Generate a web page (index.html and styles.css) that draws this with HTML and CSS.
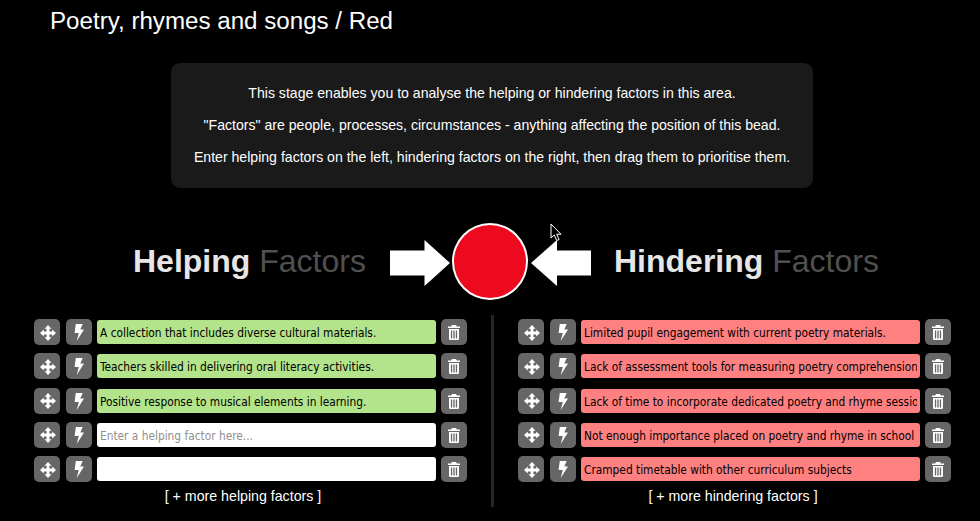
FILE: index.html
```html
<!DOCTYPE html>
<html lang="en">
<head>
<meta charset="utf-8">
<title>Poetry, rhymes and songs / Red</title>
<link rel="stylesheet" href="styles.css">
</head>
<body>
<svg class="defs" width="0" height="0" aria-hidden="true">
  <symbol id="i-move" viewBox="0 0 16 16"><path fill="#fff" d="M8 0l3.500 3.800H9.400v2.800h2.800V4.500L16 8l-3.800 3.500V9.400H9.400v2.800h2.100L8 16l-3.500-3.800h2.100V9.400H3.800v2.100L0 8l3.800-3.500v2.100h2.800V3.800H4.500z"/></symbol>
  <symbol id="i-bolt" viewBox="0 0 10 17"><path fill="#fff" d="M1.800 0h6.900L6.300 5.500H10L2.700 17l2.100-8H.6z"/></symbol>
  <symbol id="i-trash" viewBox="0 0 12 15"><path fill="#fff" fill-rule="evenodd" d="M4 0h4l.8 1.500H12V3H0V1.500h3.200zM1 4h10v9.800a1.200 1.200 0 0 1-1.200 1.200H2.200A1.200 1.200 0 0 1 1 13.800zM2.900 5.500v8h1.300v-8zM5.350 5.500v8h1.300v-8zM7.800 5.500v8h1.300v-8z"/></symbol>
</svg>

<h1 class="title">Poetry, rhymes and songs / Red</h1>

<section class="intro">
  <p>This stage enables you to analyse the helping or hindering factors in this area.</p>
  <p>"Factors" are people, processes, circumstances - anything affecting the position of this bead.</p>
  <p>Enter helping factors on the left, hindering factors on the right, then drag them to prioritise them.</p>
</section>

<section class="bead-row">
  <h2 class="factor-head"><b>Helping</b> <span>Factors</span></h2>
  <svg class="arrow" viewBox="0 0 60 46" width="60" height="46"><path fill="#fff" d="M0 10.500h34.500V0L60 23 34.500 46V35.500H0z"/></svg>
  <div class="bead"></div>
  <svg class="arrow" viewBox="0 0 60 46" width="60" height="46"><path fill="#fff" d="M60 10.500H26V0L0 23l26 23V35.500h34z"/></svg>
  <h2 class="factor-head"><b>Hindering</b> <span>Factors</span></h2>
</section>

<main class="columns">
  <section class="col">
    <div class="row">
      <button class="btn"><svg class="ic-move"><use href="#i-move"/></svg></button>
      <button class="btn"><svg class="ic-bolt"><use href="#i-bolt"/></svg></button>
      <input class="factor help" value="A collection that includes diverse cultural materials.">
      <button class="btn"><svg class="ic-trash"><use href="#i-trash"/></svg></button>
    </div>
    <div class="row">
      <button class="btn"><svg class="ic-move"><use href="#i-move"/></svg></button>
      <button class="btn"><svg class="ic-bolt"><use href="#i-bolt"/></svg></button>
      <input class="factor help" value="Teachers skilled in delivering oral literacy activities.">
      <button class="btn"><svg class="ic-trash"><use href="#i-trash"/></svg></button>
    </div>
    <div class="row">
      <button class="btn"><svg class="ic-move"><use href="#i-move"/></svg></button>
      <button class="btn"><svg class="ic-bolt"><use href="#i-bolt"/></svg></button>
      <input class="factor help" value="Positive response to musical elements in learning.">
      <button class="btn"><svg class="ic-trash"><use href="#i-trash"/></svg></button>
    </div>
    <div class="row">
      <button class="btn"><svg class="ic-move"><use href="#i-move"/></svg></button>
      <button class="btn"><svg class="ic-bolt"><use href="#i-bolt"/></svg></button>
      <input class="factor" placeholder="Enter a helping factor here...">
      <button class="btn"><svg class="ic-trash"><use href="#i-trash"/></svg></button>
    </div>
    <div class="row">
      <button class="btn"><svg class="ic-move"><use href="#i-move"/></svg></button>
      <button class="btn"><svg class="ic-bolt"><use href="#i-bolt"/></svg></button>
      <input class="factor">
      <button class="btn"><svg class="ic-trash"><use href="#i-trash"/></svg></button>
    </div>
    <div class="more more-help">[ + more helping factors ]</div>
  </section>

  <div class="divider"></div>

  <section class="col">
    <div class="row">
      <button class="btn"><svg class="ic-move"><use href="#i-move"/></svg></button>
      <button class="btn"><svg class="ic-bolt"><use href="#i-bolt"/></svg></button>
      <input class="factor hinder" value="Limited pupil engagement with current poetry materials.">
      <button class="btn"><svg class="ic-trash"><use href="#i-trash"/></svg></button>
    </div>
    <div class="row">
      <button class="btn"><svg class="ic-move"><use href="#i-move"/></svg></button>
      <button class="btn"><svg class="ic-bolt"><use href="#i-bolt"/></svg></button>
      <input class="factor hinder" value="Lack of assessment tools for measuring poetry comprehension">
      <button class="btn"><svg class="ic-trash"><use href="#i-trash"/></svg></button>
    </div>
    <div class="row">
      <button class="btn"><svg class="ic-move"><use href="#i-move"/></svg></button>
      <button class="btn"><svg class="ic-bolt"><use href="#i-bolt"/></svg></button>
      <input class="factor hinder" value="Lack of time to incorporate dedicated poetry and rhyme sessions">
      <button class="btn"><svg class="ic-trash"><use href="#i-trash"/></svg></button>
    </div>
    <div class="row">
      <button class="btn"><svg class="ic-move"><use href="#i-move"/></svg></button>
      <button class="btn"><svg class="ic-bolt"><use href="#i-bolt"/></svg></button>
      <input class="factor hinder" value="Not enough importance placed on poetry and rhyme in school">
      <button class="btn"><svg class="ic-trash"><use href="#i-trash"/></svg></button>
    </div>
    <div class="row">
      <button class="btn"><svg class="ic-move"><use href="#i-move"/></svg></button>
      <button class="btn"><svg class="ic-bolt"><use href="#i-bolt"/></svg></button>
      <input class="factor hinder" value="Cramped timetable with other curriculum subjects">
      <button class="btn"><svg class="ic-trash"><use href="#i-trash"/></svg></button>
    </div>
    <div class="more more-hinder">[ + more hindering factors ]</div>
  </section>
</main>

<svg class="cursor" viewBox="0 0 13 20" width="13" height="20" aria-hidden="true"><path fill="#000" stroke="#fff" stroke-width="1" d="M1 1v14l3.300-3 2.400 5.500 2.400-1-2.400-5.300H11z"/></svg>
</body>
</html>
```
FILE: styles.css
```css
* { box-sizing: border-box; }

html, body {
  margin: 0;
  height: 521px;
  overflow: hidden;
  background: #000;
  color: #fff;
  font-family: "Liberation Sans", Arial, sans-serif;
}

body { position: relative; }

.defs { position: absolute; }

.title {
  margin: 0;
  padding: 7px 0 0 50px;
  font-size: 24.150px;
  line-height: 28px;
  font-weight: 400;
}

.intro {
  width: 642px;
  height: 125px;
  margin: 28px 0 0 171px;
  padding: 14px 0 0;
  background: #1a1a1a;
  border-radius: 9px;
  font-size: 14.100px;
  line-height: 32px;
  text-align: center;
}

.intro p { margin: 0; }

.bead-row {
  display: flex;
  align-items: center;
  height: 78px;
  margin-top: 34px;
  padding-left: 133px;
}

.factor-head {
  margin: 0;
  font-size: 32px;
  line-height: 40px;
  font-weight: 700;
  white-space: nowrap;
}

.factor-head b { color: #e6e6e6; }
.factor-head span { color: #505050; font-weight: 400; }

.factor-head:first-child { width: 257px; }
.arrow + .bead { margin-left: 2px; }
.bead + .arrow { margin-left: 3px; }
.arrow + .factor-head { margin-left: 23px; }

.bead {
  width: 76px;
  height: 77px;
  flex: none;
  border: 2px solid #fff;
  border-radius: 50%;
  background: #ed0a1f;
}

.arrow { flex: none; margin-top: 4px; }

.columns {
  display: grid;
  grid-template-columns: 433px 3px 433px;
  column-gap: 24px;
  margin: 15px 0 0 34px;
}

.col { padding-top: 4px; }

.divider {
  width: 3px;
  height: 192px;
  background: #262626;
}

.row {
  display: flex;
  align-items: center;
  gap: 5px;
  height: 26px;
  margin-bottom: 8.250px;
}

.btn {
  width: 26px;
  height: 26px;
  flex: none;
  display: flex;
  align-items: center;
  justify-content: center;
  padding: 0;
  border: 0;
  border-radius: 5px;
  background: #666;
}

.btn + .btn { margin-left: 1px; }
.factor + .btn { margin-left: 0; }

.ic-move { width: 16px; height: 16px; margin: 1px 0 0 1px; }
.ic-bolt { width: 10px; height: 17px; margin-top: 1px; }
.ic-trash { width: 12px; height: 15px; margin-top: 1px; }

.factor {
  flex: 1;
  min-width: 0;
  height: 24px;
  padding: 2px 3px 0;
  border: 0;
  border-radius: 3px;
  outline: 0;
  background: #fff;
  color: #000;
  font-family: "DejaVu Sans Condensed", "DejaVu Sans", sans-serif;
  font-size: 11.800px;
}

.factor::placeholder { color: #8f8f8f; opacity: 1; }

.help { background: #b3e38a; }
.hinder { background: #ff8080; }

.more {
  margin-top: -3px;
  font-size: 14.200px;
  line-height: 18px;
  text-align: center;
  color: #fff;
}

.more-help { padding-right: 15px; }
.more-hinder { padding-right: 3px; }

.cursor {
  position: absolute;
  left: 550px;
  top: 223px;
}
```
